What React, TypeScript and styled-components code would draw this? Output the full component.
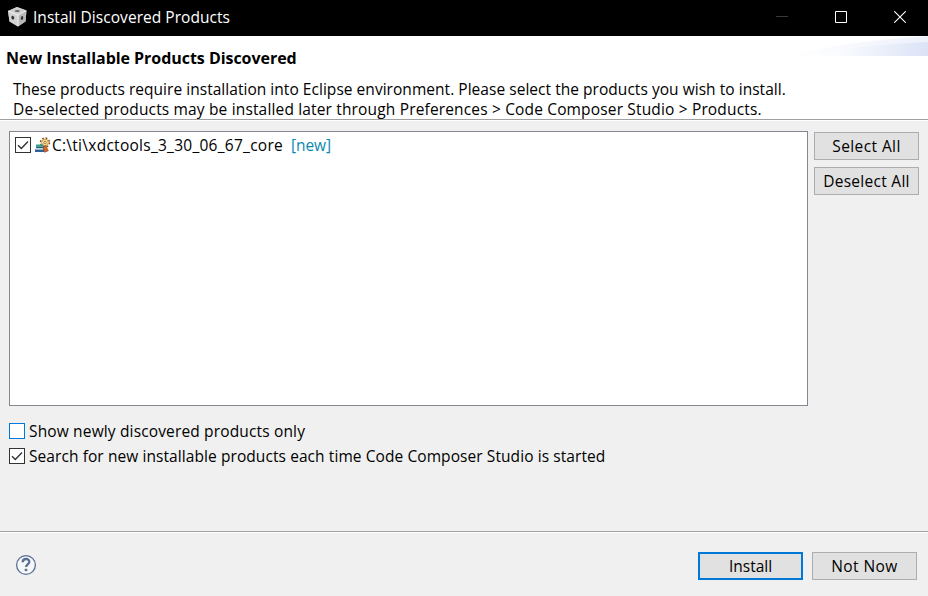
import React from "react";
import styled, { createGlobalStyle } from "styled-components";

const GlobalStyle = createGlobalStyle`
  * { box-sizing: border-box; }
  body { margin: 0; font-family: "Open Sans", "Noto Sans", sans-serif; font-size: 15.5px; color: #000; }
`;

const Dialog = styled.div`
  width: 928px;
  height: 596px;
  display: flex;
  flex-direction: column;
  background: #f0f0f0;
  overflow: hidden;
`;

const TitleBar = styled.header`
  height: 36px;
  flex: none;
  display: flex;
  align-items: center;
  background: #000;
  color: #fff;
  padding-left: 7px;
`;

const Label = styled.span<{ $spacing?: number }>`
  white-space: pre;
  line-height: 20px;
  letter-spacing: ${(p) => p.$spacing ?? 0}px;
`;

const WindowTitle = styled(Label)`
  margin: 0 -1px 2px 5px;
  flex: 1;
`;

const WindowButton = styled.button`
  width: 59px;
  height: 36px;
  padding: 0 0 2px 2px;
  border: 0;
  background: none;
  display: flex;
  align-items: center;
  justify-content: center;
`;

const Banner = styled.section`
  height: 83px;
  flex: none;
  display: flex;
  justify-content: space-between;
  background: #fff;
`;

const BannerText = styled.div`
  display: flex;
  flex-direction: column;
  padding: 12px 0 0 6px;
`;

const Heading = styled.h1<{ $spacing: number }>`
  margin: 0 0 11px;
  font-size: 16px;
  font-weight: 700;
  line-height: 20px;
  white-space: pre;
  letter-spacing: ${(p) => p.$spacing}px;
`;

const Description = styled.div`
  display: flex;
  flex-direction: column;
  padding-left: 7px;
`;

const Separator = styled.div`
  height: 2px;
  flex: none;
  background: #fff;
  border-top: 1px solid #a0a0a0;
`;

const Content = styled.main`
  flex: 1;
  padding: 10px 9px 0;
`;

const Selection = styled.div`
  display: flex;
  gap: 6px;
`;

const ProductList = styled.div`
  width: 799px;
  height: 275px;
  border: 1px solid #828790;
  background: #fff;
  padding: 3px 5px;
`;

const ProductRow = styled.div`
  display: flex;
  align-items: center;
  height: 20px;
`;

const ProductName = styled(Label)`
  margin-left: 0;
`;

const NewTag = styled(Label)`
  margin-left: 8px;
  color: #098ab0;
`;

const ButtonColumn = styled.div`
  display: flex;
  flex-direction: column;
  gap: 7px;
  padding-top: 1px;
`;

const PushButton = styled.button<{ $primary?: boolean }>`
  width: 105px;
  height: 28px;
  padding: 0;
  display: flex;
  align-items: center;
  justify-content: center;
  border: ${(p) => (p.$primary ? "2px solid #0078d7" : "1px solid #adadad")};
  background: #e1e1e1;
  color: #000;
  font: inherit;
`;

const Options = styled.div`
  display: flex;
  flex-direction: column;
  gap: 5px;
  padding-top: 15px;
`;

const OptionRow = styled.label`
  display: flex;
  align-items: center;
  gap: 4px;
  height: 20px;
`;

const Box = styled.span<{ $blue?: boolean }>`
  width: 16px;
  height: 16px;
  flex: none;
  display: flex;
  background: #fff;
  border: 1px solid ${(p) => (p.$blue ? "#0078d7" : "#333")};
`;

const Footer = styled.footer`
  height: 63px;
  flex: none;
  display: flex;
  align-items: center;
  gap: 9px;
  padding: 2px 11px 0 15px;
`;

const HelpButton = styled.button`
  width: 22px;
  height: 24px;
  padding: 0 0 2px;
  border: 0;
  background: none;
  display: flex;
  margin-right: auto;
`;

function Check({ checked, blue }: { checked?: boolean; blue?: boolean }) {
  return (
    <Box $blue={blue}>
      {checked && (
        <svg width="14" height="14" viewBox="0 0 14 14" fill="none" stroke="#333" strokeWidth="1.4">
          <path d="M2 7.2 5.3 10.4 12 3.6" />
        </svg>
      )}
    </Box>
  );
}

function CubeIcon() {
  return (
    <svg width="21" height="22" viewBox="0 0 21 22">
      <path d="M10 0 19.5 3.5 18.5 14.5 11 19.5 2.5 14.5 1 4Z" fill="#bdbdbd" />
      <path d="M10 0 19.5 3.5 11 8 1 4Z" fill="#d0d0d0" />
      <path d="M1 4 11 8V19.5L2.5 14.5Z" fill="#d2d2d2" />
      <path d="M11 8 19.5 3.5 18.5 14.5 11 19.5Z" fill="#b8b8b8" />
      <path d="M1.5 4.2 11 8.2 19 3.8M11 8V19" fill="none" stroke="#f2f2f2" strokeWidth="1" />
      <ellipse cx="10.3" cy="3.9" rx="2.6" ry="1" fill="#666" />
      <ellipse cx="5.8" cy="10.7" rx="1.4" ry="1.9" fill="#333" transform="rotate(-12 5.8 10.7)" />
      <ellipse cx="15" cy="11" rx="1.2" ry="2" fill="#333" transform="rotate(12 15 11)" />
    </svg>
  );
}

function ProductIcon() {
  return (
    <svg width="18" height="17" viewBox="-1 0 18 17">
      <circle cx="10" cy="5.5" r="4.5" fill="none" stroke="#73511f" strokeWidth="1.5" strokeDasharray="1.77 1.77" />
      <circle cx="10" cy="5.5" r="3.4" fill="#f6dc94" stroke="#c99c48" />
      <circle cx="10" cy="5.5" r="1.2" fill="#fff" stroke="#8b652c" strokeWidth=".8" />
      <path d="M1 7.5h7l1 2H1Z" fill="#35a28e" />
      <path d="M1 9.5h8v2H1Z" fill="#17697a" />
      <path d="M0 12.3h9V15H0Z" fill="#2f609a" />
      <path d="M1 11.9h7" stroke="#e0eeee" />
      <path d="m8 10 2.5-1.5 2.8 5.2-3.8 1.5Z" fill="#d36b28" stroke="#8e3c1b" strokeWidth=".7" />
    </svg>
  );
}

function BannerSwoosh() {
  return (
    <svg width="138" height="20" viewBox="0 0 138 20">
      <defs>
        <linearGradient id="sweep" x1="0" x2="1">
          <stop offset="0" stopColor="#fff" />
          <stop offset=".25" stopColor="#fafbff" />
          <stop offset="1" stopColor="#dce3f6" />
        </linearGradient>
        <linearGradient id="glow" x1="0" x2="1">
          <stop offset="0" stopColor="#fff" />
          <stop offset="1" stopColor="#edf1fb" />
        </linearGradient>
      </defs>
      <path d="M0 20Q50 6 138 0V20Z" fill="url(#glow)" />
      <path d="M20 20Q75 8 138 6V20Z" fill="url(#sweep)" />
    </svg>
  );
}

export default function App() {
  return (
    <Dialog>
      <GlobalStyle />
      <TitleBar>
        <CubeIcon />
        <WindowTitle $spacing={0.045}>Install Discovered Products</WindowTitle>
        <WindowButton aria-label="Minimize">
          <svg width="12" height="12" viewBox="0 0 12 12"><path d="M0 5.5h12" stroke="#3a3a3a" /></svg>
        </WindowButton>
        <WindowButton aria-label="Maximize">
          <svg width="12" height="12" viewBox="0 0 12 12"><path d="M.5.5h11v11H.5Z" fill="none" stroke="#fff" /></svg>
        </WindowButton>
        <WindowButton aria-label="Close">
          <svg width="12" height="12" viewBox="0 0 12 12"><path d="m.3.3 11.4 11.4M11.7.3.3 11.7" stroke="#fff" strokeWidth="1.1" /></svg>
        </WindowButton>
      </TitleBar>
      <Banner>
        <BannerText>
          <Heading $spacing={-0.04}>New Installable Products Discovered</Heading>
          <Description>
            <Label $spacing={0.037}>These products require installation into Eclipse environment. Please select the products you wish to install.</Label>
            <Label $spacing={0.157}>De-selected products may be installed later through Preferences &gt; Code Composer Studio &gt; Products.</Label>
          </Description>
        </BannerText>
        <BannerSwoosh />
      </Banner>
      <Separator />
      <Content>
        <Selection>
          <ProductList>
            <ProductRow>
              <Check checked />
              <svg width="3" height="1" />
              <ProductIcon />
              <ProductName $spacing={0.27}>C:\ti\xdctools_3_30_06_67_core</ProductName>
              <NewTag $spacing={-0.1}>[new]</NewTag>
            </ProductRow>
          </ProductList>
          <ButtonColumn>
            <PushButton><Label $spacing={0.4}>Select All</Label></PushButton>
            <PushButton><Label $spacing={0.28}>Deselect All</Label></PushButton>
          </ButtonColumn>
        </Selection>
        <Options>
          <OptionRow><Check blue /><Label $spacing={0.15}>Show newly discovered products only</Label></OptionRow>
          <OptionRow><Check checked /><Label $spacing={0.08}>Search for new installable products each time Code Composer Studio is started</Label></OptionRow>
        </Options>
      </Content>
      <Separator />
      <Footer>
        <HelpButton aria-label="Help">
          <svg width="22" height="22" viewBox="0 0 22 22" fill="none" stroke="#5a6e94">
            <circle cx="11" cy="11" r="9.4" fill="#f5f6f8" strokeWidth="1.3" />
            <path d="M7.7 8.2C7.7 4 14.3 4 14.3 7.8c0 2.6-3.2 2.6-3.2 5.2" strokeWidth="2.3" />
            <path d="M11 14.8v2.3" strokeWidth="2.6" />
          </svg>
        </HelpButton>
        <PushButton $primary><Label>Install</Label></PushButton>
        <PushButton><Label $spacing={0.43}>Not Now</Label></PushButton>
      </Footer>
    </Dialog>
  );
}
